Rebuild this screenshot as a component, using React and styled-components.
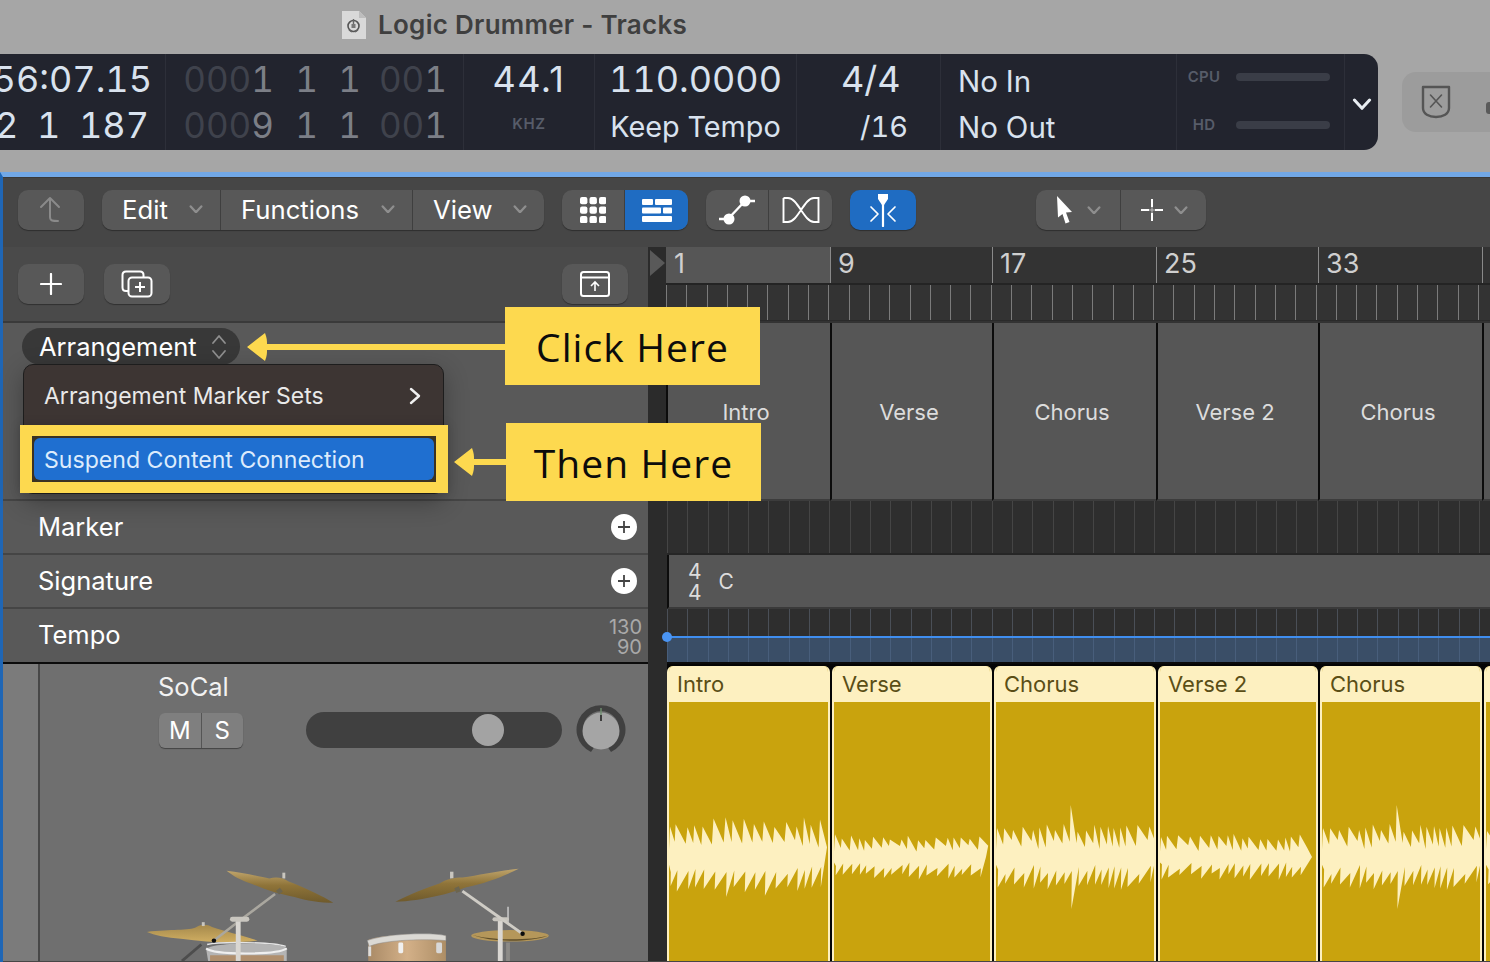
import React from "react";
import styled, { createGlobalStyle } from "styled-components";

const Global = createGlobalStyle`
  html, body { margin: 0; padding: 0; background: #a5a5a5; overflow: hidden; }
  * { box-sizing: border-box; }
  body { font-family: Inter, "Noto Sans", "Liberation Sans", sans-serif; }
`;

const Page = styled.div`
  position: relative;
  width: 1490px;
  height: 962px;
  overflow: hidden;
  background: #a6a6a6;
`;
const TitleBar = styled.div`
  height: 54px;
  display: flex;
  align-items: center;
  padding: 0 0 5px 341px;
  gap: 12px;
  color: #3f3f3f;
  font-size: 26px;
  font-weight: 600;
  letter-spacing: 0.28px;
`;
const TopRow = styled.div`
  display: flex;
  height: 96px;
  gap: 24px;
`;
const Lcd = styled.div`
  width: 1378px;
  flex: none;
  height: 96px;
  display: flex;
  background: #22242e;
  border-radius: 0 14px 14px 0;
  color: #d9e2ee;
  overflow: hidden;
`;
const LcdCell = styled.div`
  width: ${(p) => p.$w}px;
  flex: none;
  display: flex;
  flex-direction: column;
  justify-content: space-between;
  align-items: ${(p) => p.$align || "center"};
  padding: ${(p) => p.$pad || "6px 0 4px"};
  border-right: 1px solid #2d2f39;
  overflow: hidden;
  white-space: nowrap;
  font-variant-numeric: tabular-nums;
`;
const Big = styled.div`
  font-size: ${(p) => p.$size || 36}px;
  line-height: 44px;
  font-weight: 400;
  word-spacing: ${(p) => p.$word || 0}px;
  padding-left: ${(p) => p.$left || 0}px;
  padding-right: ${(p) => p.$right || 0}px;
`;
const Rate = styled(Big)`
  font-variant-numeric: normal;
  letter-spacing: 1.4px;
`;
const Counter = styled.div`
  display: grid;
  grid-template-columns: 95px 44px 43px 86px;
  font-size: 35px;
  line-height: 44px;
  color: #7c7f87;
  text-align: right;
`;
const Dim = styled.span`
  color: #3f424c;
`;
const Khz = styled.div`
  font-size: 15px;
  line-height: 44px;
  font-weight: 600;
  letter-spacing: 0.6px;
  color: #575c69;
  margin-bottom: 1px;
`;
const MeterRow = styled.div`
  display: grid;
  grid-template-columns: 46px 94px;
  gap: 9px;
  align-items: center;
  height: 44px;
  color: #575c69;
  font-size: 15px;
  font-weight: 600;
  letter-spacing: 0.3px;
  text-align: center;
`;
const MeterBar = styled.div`
  height: 8px;
  margin-top: 2px;
  border-radius: 4px;
  background: #3a3d47;
`;
const LcdEnd = styled.div`
  flex: 1;
  display: flex;
  align-items: center;
  justify-content: center;
  padding-top: 4px;
`;
const SideButton = styled.div`
  flex: none;
  width: 120px;
  height: 60px;
  margin-top: 18px;
  display: flex;
  align-items: center;
  padding-left: 19px;
  gap: 35px;
  border-radius: 14px;
  background: #9c9c9c;
`;
const SideStub = styled.div`
  width: 8px;
  height: 12px;
  margin-top: 11px;
  border-radius: 3px;
  background: #5a5a5a;
`;

const Window = styled.div`
  margin-top: 22px;
  height: 790px;
  border-top: 5px solid #72a8e6;
  border-left: 3px solid #1f66b5;
  background: #464646;
`;
const Toolbar = styled.div`
  height: 70px;
  display: flex;
  align-items: flex-start;
  padding: 12px 0 0 15px;
  background: #464646;
  border-top: 1px solid #3a3a3a;
`;
const Btn = styled.div`
  flex: none;
  height: 40px;
  width: ${(p) => p.$w}px;
  margin-right: ${(p) => p.$mr ?? 18}px;
  display: flex;
  align-items: center;
  justify-content: center;
  border-radius: 10px;
  background: ${(p) => (p.$on ? "#1f6cc2" : "#585858")};
  box-shadow: 0 1px 1px rgba(0, 0, 0, 0.35);
`;
const BtnGroup = styled.div`
  flex: none;
  height: 40px;
  margin-right: ${(p) => p.$mr ?? 18}px;
  display: flex;
  border-radius: 10px;
  overflow: hidden;
  background: #585858;
  box-shadow: 0 1px 1px rgba(0, 0, 0, 0.35);
`;
const Seg = styled.div`
  width: ${(p) => p.$w}px;
  display: flex;
  align-items: center;
  justify-content: ${(p) => (p.$menu ? "space-between" : "center")};
  padding: ${(p) => (p.$menu ? "0 17px 2px 20px" : "0")};
  gap: ${(p) => p.$gap || 0}px;
  color: #fff;
  font-size: 25.7px;
  background: ${(p) => (p.$on ? "#1f6cc2" : "transparent")};
  border-right: ${(p) => (p.$last ? "0" : "1px solid #3f3f3f")};
`;

const Body = styled.div`
  display: grid;
  grid-template-columns: 645px 1fr;
  grid-template-rows: 76px 178px 54px 54px 55px 1fr;
  height: 714px;
`;
const LeftCell = styled.div`
  display: flex;
  align-items: center;
  padding: 0 ${(p) => p.$pr ?? 11}px 2px 35px;
  background: #595959;
  border-bottom: 2px solid #454545;
  color: #fff;
  font-size: 25.5px;
`;
const HeaderCell = styled(LeftCell)`
  padding: 0 20px 0 15px;
  background: #4a4a4a;
  border-bottom: 2px solid #3a3a3a;
  justify-content: space-between;
`;
const HeaderGroup = styled.div`
  display: flex;
  gap: 2px;
`;
const ArrangeCell = styled(LeftCell)`
  align-items: flex-start;
  padding: 5px 0 0 19px;
`;
const TempoCell = styled(LeftCell)`
  border-bottom: 2px solid #0b0b0b;
  padding: 0 6px 3px 35px;
`;
const Grow = styled.div`
  flex: 1;
`;
const Pill = styled.div`
  width: 218px;
  height: 37px;
  display: flex;
  align-items: center;
  justify-content: space-between;
  padding: 0 13px 0 17px;
  border-radius: 19px;
  background: #383838;
  font-size: 25.5px;
`;
const PlusCircle = styled.div`
  width: 26px;
  height: 26px;
  margin: 2px 0 0 0;
  border-radius: 50%;
  background: #fff;
  display: flex;
  align-items: center;
  justify-content: center;
`;
const TempoScale = styled.div`
  margin-top: 5px;
  font-size: 20px;
  line-height: 20px;
  text-align: right;
  color: #a9a9a9;
`;
const RightCell = styled.div`
  display: flex;
  padding-left: ${(p) => p.$pl ?? 19}px;
  background: #2b2b2b;
  min-width: 0;
  overflow: hidden;
  position: relative;
`;
const Ruler = styled.div`
  flex: 1;
  display: flex;
  flex-direction: column;
  background: #333;
`;
const RulerTop = styled.div`
  height: 38px;
  display: flex;
  border-bottom: 2px solid #242424;
`;
const RulerBar = styled.div`
  width: ${(p) => p.$w}px;
  flex: none;
  padding-left: 7px;
  font-size: 27px;
  line-height: 33px;
  color: #cfcfcf;
  background: ${(p) => (p.$cycle ? "#565656" : "transparent")};
  border-left: 1px solid ${(p) => (p.$cycle ? "transparent" : "#8a8a8a")};
`;
const RulerTicks = styled.div`
  flex: 1;
  margin-bottom: 2px;
  background-image: repeating-linear-gradient(
    to right,
    #7b7b7b 0,
    #7b7b7b 1px,
    transparent 1px,
    transparent 20.3px
  );
  border-bottom: 1px solid #2a2a2a;
`;
const Triangle = styled.div`
  position: absolute;
  left: 2px;
  top: 3px;
  width: 0;
  height: 0;
  border-top: 13px solid transparent;
  border-bottom: 13px solid transparent;
  border-left: 15px solid #595959;
`;
const SectionRow = styled.div`
  flex: 1;
  display: flex;
`;
const Section = styled.div`
  width: ${(p) => p.$w}px;
  flex: none;
  padding: 76px 6px 0 0;
  text-align: center;
  background: #565656;
  border-left: 2px solid #0c0c0c;
  border-bottom: 2px solid #3c3c3c;
  color: #dcdcdc;
  font-size: 22px;
  line-height: 26px;
`;
const GridRow = styled.div`
  flex: 1;
  background-color: #2e2e2e;
  background-image: repeating-linear-gradient(
    to right,
    #454545 0,
    #454545 1px,
    transparent 1px,
    transparent 20.3px
  );
  border-bottom: 2px solid #262626;
`;
const SignatureRow = styled.div`
  flex: 1;
  display: flex;
  align-items: center;
  gap: 17px;
  padding: 1px 0 0 19px;
  background: #565656;
  border-left: 2px solid #0c0c0c;
  border-bottom: 2px solid #3a3a3a;
  color: #dcdcdc;
  font-size: 21px;
`;
const Fraction = styled.div`
  line-height: 21px;
  text-align: center;
`;
const TempoRow = styled.div`
  flex: 1;
  display: flex;
  flex-direction: column;
  background-image: repeating-linear-gradient(
    to right,
    #4a4f57 0,
    #4a4f57 1px,
    transparent 1px,
    transparent 20.3px
  );
  background-color: #2e2e2e;
  border-bottom: 2px solid #0b0b0b;
`;
const TempoTop = styled.div`
  height: 29px;
  border-bottom: 2px solid #3f8ef0;
`;
const TempoFill = styled.div`
  flex: 1;
  background: rgba(70, 110, 160, 0.5);
`;
const TempoDot = styled.div`
  position: absolute;
  left: 14px;
  top: 23px;
  width: 10px;
  height: 10px;
  border-radius: 50%;
  background: #4a94f2;
`;
const TrackCell = styled.div`
  display: flex;
  background: #6f6f6f;
  overflow: hidden;
`;
const TrackStrip = styled.div`
  width: 37px;
  flex: none;
  background: #7b7b7b;
  border-right: 2px solid #474747;
`;
const TrackMain = styled.div`
  flex: 1;
  display: flex;
  flex-direction: column;
  color: #f2f2f2;
`;
const TrackName = styled.div`
  margin: 7px 0 0 118px;
  height: 32px;
  font-size: 25.5px;
  line-height: 32px;
`;
const TrackControls = styled.div`
  display: flex;
  align-items: center;
  margin-top: 2px;
  padding-left: 119px;
`;
const MuteSolo = styled.div`
  width: 84px;
  height: 35px;
  display: flex;
  border-radius: 6px;
  overflow: hidden;
  background: #7f7f7f;
  box-shadow: 0 1px 1px rgba(0, 0, 0, 0.4);
`;
const MuteKey = styled.div`
  flex: 1;
  text-align: center;
  font-size: 24px;
  line-height: 35px;
  color: #fff;
  border-right: ${(p) => (p.$last ? "0" : "1px solid #555")};
`;
const Slider = styled.div`
  width: 256px;
  height: 36px;
  margin-left: 63px;
  padding-left: 166px;
  display: flex;
  align-items: center;
  border-radius: 18px;
  background: #404040;
`;
const Thumb = styled.div`
  width: 32px;
  height: 32px;
  border-radius: 50%;
  background: #a3a3a3;
`;
const Regions = styled.div`
  flex: 1;
  display: flex;
  gap: 2px;
  padding-top: 2px;
  background: #050505;
`;
const Region = styled.div`
  width: ${(p) => p.$w}px;
  flex: none;
  display: flex;
  flex-direction: column;
  border-radius: 6px 6px 0 0;
  overflow: hidden;
  background: #c9a30d;
  border: solid #fdf0c0;
  border-width: 0 2px;
`;
const RegionHead = styled.div`
  height: 36px;
  padding-left: 8px;
  background: #fdf0c0;
  color: #5a4e16;
  font-size: 22px;
  line-height: 37px;
`;
const Wave = styled.svg`
  display: block;
  margin-top: 100px;
  flex: none;
`;
const RegionRest = styled.div`
  flex: 1;
  background: #c9a30d;
`;

const Menu = styled.div`
  position: absolute;
  left: 23px;
  top: 364px;
  width: 421px;
  height: 130px;
  padding: 11px 22px 0 20px;
  display: flex;
  align-items: flex-start;
  justify-content: space-between;
  border-radius: 10px;
  background: #3d3533;
  border: 1px solid #1d1d1d;
  box-shadow: 0 8px 24px rgba(0, 0, 0, 0.3);
  color: #e9e9e9;
  font-size: 23px;
  line-height: 40px;
`;
const MenuChevron = styled.svg`
  margin-top: 11px;
`;
const Highlight = styled.div`
  position: absolute;
  left: 20px;
  top: 425px;
  width: 428px;
  height: 68px;
  padding: 2px;
  border: 11px solid #fdd94f;
  border-width: 11px 12px;
  background: #3a3222;
  box-shadow: 0 0 10px rgba(0, 0, 0, 0.15);
`;
const HighlightItem = styled.div`
  height: 100%;
  padding-left: 10px;
  border-radius: 6px;
  background: #1f6fd0;
  color: #dcebfc;
  font-size: 23.1px;
  line-height: 44px;
`;
const Callout = styled.div`
  position: absolute;
  left: ${(p) => p.$x}px;
  top: ${(p) => p.$y}px;
  width: 255px;
  height: 78px;
  display: flex;
  align-items: center;
  justify-content: center;
  background: #fdd94f;
  color: #0c0c0c;
  font-family: "Open Sans", "Noto Sans", sans-serif;
  font-size: 39px;
  letter-spacing: 1.1px;
`;
const Arrow = styled.svg`
  position: absolute;
  left: ${(p) => p.$x}px;
  top: ${(p) => p.$y}px;
`;

const Chevron = ({ c = "#8e8e8e", w = 14, sw = 2.4 }) => (
  <svg width={w} height={w * 0.62} viewBox="0 0 14 9" fill="none">
    <path d="M1.5 1.5 L7 7.5 L12.5 1.5" stroke={c} strokeWidth={sw} strokeLinecap="round" strokeLinejoin="round" />
  </svg>
);

const DocIcon = () => (
  <svg width="25" height="28" viewBox="0 0 25 28">
    <path d="M1 0 H18 L25 7 V28 H1 Z" fill="#d9d9d9" />
    <path d="M18 0 L25 7 H18 Z" fill="#bdbdbd" />
    <circle cx="12.5" cy="15" r="5.5" fill="none" stroke="#555" strokeWidth="1.6" />
    <path d="M12.5 8 V13 M8 19 L11 21 M17 19 L14 21" stroke="#666" strokeWidth="1.4" />
    <rect x="10.5" y="13" width="4" height="4" fill="#777" />
  </svg>
);
const ShieldX = () => (
  <svg width="30" height="34" viewBox="0 0 30 34" fill="none" stroke="#555" strokeLinecap="round">
    <path d="M2 2 H28 V23 C28 29 22 32 15 32 C8 32 2 29 2 23 Z" strokeWidth="2.4" strokeLinejoin="round" />
    <path d="M9.5 10 L20.5 22 M20.5 10 L9.5 22" strokeWidth="1.6" />
  </svg>
);
const BackIcon = () => (
  <svg width="26" height="28" viewBox="0 0 26 28" fill="none" stroke="#8a8a8a" strokeWidth="2" strokeLinecap="round" strokeLinejoin="round">
    <path d="M3 11 L12 2 L21 11 M12 2 V21 C12 25 15 25 20 25" />
  </svg>
);
const GridIcon = () => (
  <svg width="26" height="26" viewBox="0 0 26 26" fill="#fff">
    {[0, 9.5, 19].flatMap((y) =>
      [0, 9.5, 19].map((x) => <rect key={`${x}-${y}`} x={x} y={y} width="7.4" height="7.2" rx="2" />)
    )}
  </svg>
);
const ListIcon = () => (
  <svg width="30" height="24" viewBox="0 0 30 24" fill="#fff">
    <rect x="0" y="1" width="11" height="6" rx="1" />
    <rect x="13" y="1" width="17" height="6" rx="1" />
    <rect x="0" y="9.5" width="19" height="6" rx="1" />
    <rect x="21" y="9.5" width="9" height="6" rx="1" />
    <rect x="0" y="18" width="30" height="6" rx="1" />
  </svg>
);
const AutomationIcon = () => (
  <svg width="38" height="30" viewBox="0 0 38 30" fill="#fff">
    <path d="M10 24 L27 6" stroke="#fff" strokeWidth="2.4" />
    <ellipse cx="27" cy="6" rx="5.5" ry="5.5" />
    <ellipse cx="11" cy="24" rx="5.5" ry="5.5" />
    <path d="M27 6 H37 M1 24 H11" stroke="#fff" strokeWidth="2.4" />
  </svg>
);
const CrossfadeIcon = () => (
  <svg width="38" height="26" viewBox="0 0 38 26" fill="none" stroke="#fff" strokeWidth="1.9">
    <path d="M1.5 1 V25 H6 C16 25 22 1 32 1 H36.5 V25 H32 C22 25 16 1 6 1 H1.5" />
  </svg>
);
const CatchIcon = () => (
  <svg width="28" height="34" viewBox="0 0 28 34" fill="none" stroke="#fff" strokeLinecap="round">
    <path d="M9 1 H19 V6 L15 12 H13 L9 6 Z" fill="#fff" stroke="none" />
    <path d="M14 11 V33" strokeWidth="2.2" />
    <path d="M2 14 L9 21 L2 28 M26 14 L19 21 L26 28" strokeWidth="1.7" strokeLinejoin="round" />
  </svg>
);
const PointerIcon = () => (
  <svg width="20" height="30" viewBox="0 0 20 30" fill="#fff">
    <path d="M2 1 L17 17 L11 17.5 L14.5 27 L10.5 28.5 L7.5 19 L3 22.5 Z" />
  </svg>
);
const CrossIcon = () => (
  <svg width="24" height="24" viewBox="0 0 24 24" stroke="#fff" strokeWidth="2">
    <path d="M1 12 H9 M15 12 H23 M12 1 V9 M12 15 V23" />
    <path d="M9 12 H15 M12 9 V15" strokeWidth="1" opacity="0.6" />
  </svg>
);
const PlusIcon = () => (
  <svg width="22" height="22" viewBox="0 0 22 22" stroke="#fff" strokeWidth="2.2" strokeLinecap="round">
    <path d="M11 1 V21 M1 11 H21" />
  </svg>
);
const StackPlusIcon = () => (
  <svg width="32" height="28" viewBox="0 0 32 28" fill="none" stroke="#fff" strokeWidth="2">
    <path d="M7 21 H5 C3 21 1.5 19.5 1.5 17.5 V5 C1.5 3 3 1.5 5 1.5 H19 C21 1.5 22.5 3 22.5 5 V7" />
    <rect x="7.5" y="7.5" width="23" height="19" rx="3.5" />
    <path d="M19 12 V22 M14 17 H24" />
  </svg>
);
const PanelUpIcon = () => (
  <svg width="30" height="26" viewBox="0 0 30 26" fill="none" stroke="#fff" strokeWidth="2">
    <rect x="1" y="1" width="28" height="24" rx="2.5" />
    <path d="M1 6.5 H29" />
    <path d="M15 20 V11.5 M11 15 L15 11 L19 15" strokeWidth="1.6" />
  </svg>
);
const UpDownIcon = () => (
  <svg width="16" height="26" viewBox="0 0 16 26" fill="none" stroke="#8f8f8f" strokeWidth="1.8" strokeLinecap="round" strokeLinejoin="round">
    <path d="M2 9 L8 2 L14 9 M2 17 L8 24 L14 17" />
  </svg>
);
const RightChevron = () => (
  <MenuChevron width="12" height="18" viewBox="0 0 12 18" fill="none" stroke="#f0f0f0" strokeWidth="2.4" strokeLinecap="round" strokeLinejoin="round">
    <path d="M2 2 L10 9 L2 16" />
  </MenuChevron>
);
const SmallPlus = () => (
  <svg width="14" height="14" viewBox="0 0 14 14" stroke="#444" strokeWidth="1.8">
    <path d="M7 1 V13 M1 7 H13" />
  </svg>
);
const Knob = () => (
  <svg width="50" height="50" viewBox="0 0 50 50" style={{ marginLeft: 14 }}>
    <path d="M15 47 A24.5 24.5 0 1 1 35 47 L31 41 A18 18 0 1 0 19 41 Z" fill="#404040" />
    <circle cx="25" cy="26" r="18.5" fill="#a5a5a5" />
    <path d="M25 3 V10" stroke="#6f8f6f" strokeWidth="1.4" />
    <path d="M25 10 V16" stroke="#222" strokeWidth="1.6" />
  </svg>
);
const Drums = () => (
  <svg width="608" height="102" viewBox="40 862 608 102" style={{ display: "block", marginTop: 107 }}>
    <defs>
      <linearGradient id="brassA" x1="0" y1="0" x2="0" y2="1">
        <stop offset="0" stopColor="#c0a56c" />
        <stop offset="0.45" stopColor="#8f7439" />
        <stop offset="1" stopColor="#6f5a2c" />
      </linearGradient>
      <linearGradient id="brassB" x1="0" y1="0" x2="0" y2="1">
        <stop offset="0" stopColor="#a5894c" />
        <stop offset="1" stopColor="#d0ae62" />
      </linearGradient>
      <linearGradient id="wood" x1="0" y1="0" x2="1" y2="0">
        <stop offset="0" stopColor="#a98a66" />
        <stop offset="0.5" stopColor="#d3b088" />
        <stop offset="1" stopColor="#ad8e66" />
      </linearGradient>
    </defs>
    <path d="M197 947 L177 964" stroke="#4d4d4d" strokeWidth="3" />
    <path d="M141 934 C165 931 185 933 192 929 C197 926 203 926 208 929 C220 933 240 938 255 943 C235 946 205 945 176 941 C162 940 148 937 141 934 Z" fill="url(#brassB)" />
    <path d="M199 924 V928" stroke="#c9c6bf" strokeWidth="3" />
    <path d="M202 952 C205 944 281 944 285 951 V964 H204 Z" fill="#b4b4b4" />
    <path d="M202 951 C210 958 275 958 285 951" stroke="#efefef" strokeWidth="2.2" fill="none" />
    <path d="M203 947 C215 944 270 944 284 949" stroke="#e4e4e4" strokeWidth="1.4" fill="none" />
    <path d="M206 958 H282 V964 H206 Z" fill="#b08f6d" />
    <path d="M210 943 L237 922 L273 895" stroke="#aaa79f" strokeWidth="2.6" fill="none" />
    <circle cx="210" cy="943" r="2.3" fill="#0c0c0c" />
    <path d="M235 922 V964" stroke="#dad7d2" strokeWidth="5" />
    <path d="M229 921 H244" stroke="#c9c6bf" strokeWidth="5" strokeLinecap="round" />
    <path d="M282 873 V879" stroke="#c9c6bf" strokeWidth="3" />
    <path d="M223 871 C240 873 258 877 267 879 C274 877 281 878 287 882 C305 889 322 897 333 904 C320 904 305 902 293 898 C280 896 262 890 250 885 C238 881 229 876 223 871 Z" fill="url(#brassA)" />
    <path d="M276 890 L279 894" stroke="#6c654f" strokeWidth="5" />
    <path d="M369 942 C385 936 435 935 449 938 V964 H369 Z" fill="url(#wood)" />
    <path d="M368 943 C385 936 435 934 449 938 V943 C430 941 385 942 370 949 Z" fill="#dbd9d4" stroke="#8c8c8c" strokeWidth="0.5" />
    <rect x="400" y="945" width="5" height="11" rx="1.5" fill="#f0f0f0" />
    <rect x="439" y="945" width="6" height="11" rx="1.5" fill="#d8d8d8" />
    <rect x="369" y="949" width="3" height="10" fill="#ddd" />
    <path d="M455 872 V879" stroke="#c9c6bf" strokeWidth="3.5" />
    <path d="M397 903 C410 896 428 889 443 884 C448 880 458 878 466 878 C485 875 508 870 524 869 C510 876 490 884 470 888 C455 894 425 902 397 903 Z" fill="url(#brassA)" />
    <path d="M460 888 L462 893" stroke="#6c654f" strokeWidth="5" />
    <ellipse cx="515" cy="938" rx="40" ry="6" fill="#b5975a" />
    <path d="M476 937 C495 943 535 943 554 938 C535 945 495 945 476 937 Z" fill="#5e4e2a" />
    <path d="M513 908 V924" stroke="#c6c6c6" strokeWidth="1.6" />
    <path d="M513 945 V964" stroke="#8c8a86" strokeWidth="4" />
    <path d="M505 921 V964" stroke="#dad7d2" strokeWidth="5" />
    <path d="M499 921 H512" stroke="#c9c6bf" strokeWidth="4" strokeLinecap="round" />
    <path d="M466 892 L528 936" stroke="#cfccc5" strokeWidth="3" />
    <circle cx="528" cy="936" r="2.3" fill="#0c0c0c" />
  </svg>
);

const hash = (n) => {
  const v = Math.sin(n * 127.1 + 11.7) * 43758.5453;
  return v - Math.floor(v);
};
const wavePath = ({ len, amp, body, seed, big, arrow }) => {
  const cy = 55;
  const top = [];
  const bottom = [];
  let x = 1;
  let i = 0;
  top.push([0, cy - body * 0.6]);
  bottom.push([0, cy + body * 0.6]);
  while (x < len) {
    const r = hash(seed + i);
    const step = 5 + r * 7;
    const near = big && x <= big && big < x + step;
    const a = near ? 52 : amp * (0.72 + 0.28 * hash(seed + i + 40));
    const b = body * (0.6 + 0.7 * hash(seed + i + 80));
    top.push([x, cy - a]);
    top.push([x + step * 0.85, cy - b]);
    const a2 = near ? 52 : amp * (0.72 + 0.28 * hash(seed + i + 120));
    bottom.push([x + step * 0.15, cy + b]);
    bottom.push([x + step * 0.1, cy + a2]);
    x += step;
    i += 1;
  }
  if (arrow) top.push([len + 6, cy]);
  const pts = top.concat(bottom.reverse());
  return "M" + pts.map((p) => `${p[0].toFixed(1)} ${p[1].toFixed(1)}`).join("L") + "Z";
};

const bars = [164, 162, 164, 162, 164, 40];
const sections = ["Intro", "Verse", "Chorus", "Verse 2", "Chorus", ""];
const rulerNums = ["1", "9", "17", "25", "33", ""];
const regions = [
  { name: "Intro", w: 163, wave: { len: 156, amp: 40, body: 13, seed: 3 } },
  { name: "Verse", w: 160, wave: { len: 146, amp: 23, body: 9, seed: 17, arrow: true } },
  { name: "Chorus", w: 162, wave: { len: 158, amp: 34, body: 13, seed: 31, big: 79 } },
  { name: "Verse 2", w: 160, wave: { len: 146, amp: 23, body: 9, seed: 47, arrow: true } },
  { name: "Chorus", w: 162, wave: { len: 158, amp: 34, body: 13, seed: 31, big: 79 } },
  { name: "", w: 30, wave: { len: 30, amp: 34, body: 13, seed: 7 } },
];

export default function App() {
  return (
    <Page>
      <Global />
      <TitleBar>
        <DocIcon />
        <span>Logic Drummer - Tracks</span>
      </TitleBar>
      <TopRow>
        <Lcd>
          <LcdCell $w={166} $align="flex-end" $pad="3px 13px 3px 0">
            <Big>56:07.15</Big>
            <Big $word={9} $right={3}>2 1 187</Big>
          </LcdCell>
          <LcdCell $w={298} $align="flex-start" $pad="3px 0 3px 13px">
            <Counter>
              <div><Dim>000</Dim>1</div>
              <div>1</div>
              <div>1</div>
              <div><Dim>00</Dim>1</div>
            </Counter>
            <Counter>
              <div><Dim>000</Dim>9</div>
              <div>1</div>
              <div>1</div>
              <div><Dim>00</Dim>1</div>
            </Counter>
          </LcdCell>
          <LcdCell $w={131} $pad="3px 0">
            <Rate>44.1</Rate>
            <Khz>KHZ</Khz>
          </LcdCell>
          <LcdCell $w={202} $pad="3px 0 1px">
            <Big>110.0000</Big>
            <Big $size={28.8}>Keep Tempo</Big>
          </LcdCell>
          <LcdCell $w={144} $pad="3px 0 1px" $align="flex-start">
            <Big $left={44}>4/4</Big>
            <Big $size={29} $left={63}>/16</Big>
          </LcdCell>
          <LcdCell $w={236} $pad="5px 0 1px 17px" $align="flex-start">
            <Big $size={29.5}>No In</Big>
            <Big $size={29.5}>No Out</Big>
          </LcdCell>
          <LcdCell $w={168} $pad="0 0 4px 4px" $align="flex-start">
            <MeterRow><span>CPU</span><MeterBar /></MeterRow>
            <MeterRow><span>HD</span><MeterBar /></MeterRow>
          </LcdCell>
          <LcdEnd>
            <Chevron c="#e8edf2" w={20} sw={2.2} />
          </LcdEnd>
        </Lcd>
        <SideButton>
          <ShieldX />
          <SideStub />
        </SideButton>
      </TopRow>

      <Window>
        <Toolbar>
          <Btn $w={66}><BackIcon /></Btn>
          <BtnGroup>
            <Seg $w={119} $menu>Edit<Chevron /></Seg>
            <Seg $w={192} $menu>Functions<Chevron /></Seg>
            <Seg $w={131} $menu $last>View<Chevron /></Seg>
          </BtnGroup>
          <BtnGroup>
            <Seg $w={63}><GridIcon /></Seg>
            <Seg $w={63} $on $last><ListIcon /></Seg>
          </BtnGroup>
          <BtnGroup>
            <Seg $w={63}><AutomationIcon /></Seg>
            <Seg $w={63} $last><CrossfadeIcon /></Seg>
          </BtnGroup>
          <Btn $w={66} $on $mr={120}><CatchIcon /></Btn>
          <BtnGroup $mr={0}>
            <Seg $w={85} $gap={12}><PointerIcon /><Chevron /></Seg>
            <Seg $w={85} $gap={10} $last><CrossIcon /><Chevron /></Seg>
          </BtnGroup>
        </Toolbar>
        <Body>
          <HeaderCell>
            <HeaderGroup>
              <Btn $w={66}><PlusIcon /></Btn>
              <Btn $w={66}><StackPlusIcon /></Btn>
            </HeaderGroup>
            <Btn $w={66} $mr={0}><PanelUpIcon /></Btn>
          </HeaderCell>
          <RightCell $pl={18}>
            <Triangle />
            <Ruler>
              <RulerTop>
                {bars.map((w, i) => (
                  <RulerBar key={i} $w={w} $cycle={i === 0}>{rulerNums[i]}</RulerBar>
                ))}
              </RulerTop>
              <RulerTicks />
            </Ruler>
          </RightCell>

          <ArrangeCell>
            <Pill>Arrangement<UpDownIcon /></Pill>
          </ArrangeCell>
          <RightCell $pl={18}>
            <SectionRow>
              {bars.map((w, i) => (
                <Section key={i} $w={w}>{sections[i]}</Section>
              ))}
            </SectionRow>
          </RightCell>

          <LeftCell>Marker<Grow /><PlusCircle><SmallPlus /></PlusCircle></LeftCell>
          <RightCell><GridRow /></RightCell>

          <LeftCell>Signature<Grow /><PlusCircle><SmallPlus /></PlusCircle></LeftCell>
          <RightCell>
            <SignatureRow>
              <Fraction>4<br />4</Fraction>
              <span>C</span>
            </SignatureRow>
          </RightCell>

          <TempoCell>
            Tempo<Grow />
            <TempoScale>130<br />90</TempoScale>
          </TempoCell>
          <RightCell>
            <TempoRow>
              <TempoTop />
              <TempoFill />
            </TempoRow>
            <TempoDot />
          </RightCell>

          <TrackCell>
            <TrackStrip />
            <TrackMain>
              <TrackName>SoCal</TrackName>
              <TrackControls>
                <MuteSolo>
                  <MuteKey>M</MuteKey>
                  <MuteKey $last>S</MuteKey>
                </MuteSolo>
                <Slider><Thumb /></Slider>
                <Knob />
              </TrackControls>
              <Drums />
            </TrackMain>
          </TrackCell>
          <RightCell>
            <Regions>
              {regions.map((r, i) => (
                <Region key={i} $w={r.w}>
                  <RegionHead>{r.name}</RegionHead>
                  <Wave width={r.w - 4} height="110" viewBox={`0 0 ${r.w - 4} 110`}>
                    <path d={wavePath(r.wave)} fill="#fdf0c0" />
                  </Wave>
                  <RegionRest />
                </Region>
              ))}
            </Regions>
          </RightCell>
        </Body>
      </Window>

      <Menu>
        <span>Arrangement Marker Sets</span>
        <RightChevron />
      </Menu>
      <Highlight>
        <HighlightItem>Suspend Content Connection</HighlightItem>
      </Highlight>
      <Callout $x={505} $y={307}>Click Here</Callout>
      <Callout $x={506} $y={423}>Then Here</Callout>
      <Arrow $x={246} $y={332} width="260" height="30" viewBox="0 0 260 30">
        <path d="M1 15 L19 1 C21 6 21 9 21 12 H260 V18 H21 C21 21 21 24 19 29 Z" fill="#fdd94f" />
      </Arrow>
      <Arrow $x={453} $y={447} width="54" height="30" viewBox="0 0 54 30">
        <path d="M1 15 L19 1 C21 6 21 9 21 12 H54 V18 H21 C21 21 21 24 19 29 Z" fill="#fdd94f" />
      </Arrow>
    </Page>
  );
}
